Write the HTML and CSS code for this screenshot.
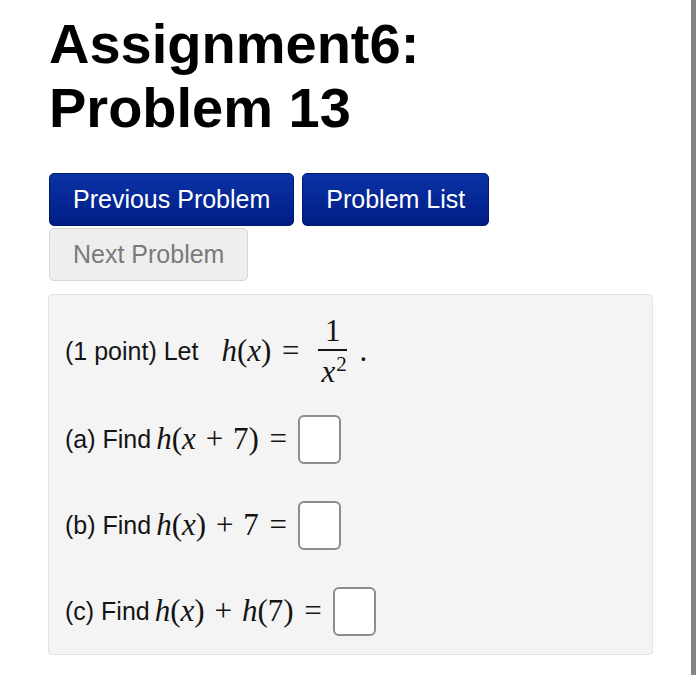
FILE: index.html
```html
<!DOCTYPE html>
<html lang="en">
<head>
<meta charset="utf-8">
<title>Assignment6: Problem 13</title>
<link rel="stylesheet" href="styles.css">
</head>
<body>
<div class="screen">
  <main class="page">
    <h1 class="title">Assignment6:<br>Problem 13</h1>
    <nav class="nav">
      <a class="btn btn-primary" href="#">Previous Problem</a>
      <a class="btn btn-primary" href="#">Problem List</a>
      <span class="btn btn-disabled">Next Problem</span>
    </nav>
    <section class="problem">
      <div class="row row-intro">
        <span class="txt">(1 point) Let</span>
        <span class="math intro-math"><i>h</i>(<i>x</i>)<span class="rel">=</span></span>
        <span class="frac">
          <span class="num">1</span>
          <span class="den"><i>x</i><sup>2</sup></span>
        </span>
        <span class="period">.</span>
      </div>
      <div class="row">
        <span class="txt">(a) Find</span>
        <span class="math"><i>h</i>(<i>x</i><span class="op">+</span>7)<span class="rel">=</span></span>
        <span class="answer"></span>
      </div>
      <div class="row">
        <span class="txt">(b) Find</span>
        <span class="math"><i>h</i>(<i>x</i>)<span class="op">+</span>7<span class="rel">=</span></span>
        <span class="answer"></span>
      </div>
      <div class="row">
        <span class="txt">(c) Find</span>
        <span class="math"><i>h</i>(<i>x</i>)<span class="op">+</span><i>h</i>(7)<span class="rel">=</span></span>
        <span class="answer"></span>
      </div>
    </section>
  </main>
  <div class="scrollbar"></div>
</div>
</body>
</html>
```

FILE: styles.css
```css
* { box-sizing: border-box; }

html, body {
  margin: 0;
  padding: 0;
  background: #ffffff;
}

body {
  font-family: "Liberation Sans", Arial, sans-serif;
  color: #141414;
}

.screen {
  display: flex;
  width: 700px;
  min-height: 675px;
}

.page {
  flex: 0 0 691px;
  padding-left: 48px;
}

.scrollbar {
  flex: 0 0 5px;
  background: #828282;
}

.title {
  margin: 12px 0 33px 1px;
  font-size: 56px;
  line-height: 64px;
  font-weight: bold;
  color: #000000;
}

.nav {
  display: flex;
  flex-wrap: wrap;
  gap: 2px 8px;
  width: 604px;
  margin-left: 1px;
}

.btn {
  display: inline-flex;
  align-items: center;
  justify-content: center;
  height: 53px;
  padding: 0 23px;
  border-radius: 5px;
  font-size: 25px;
  text-decoration: none;
  border: 1px solid transparent;
}

.btn-primary {
  color: #ffffff;
  background: linear-gradient(#0a33a6, #001d85);
  border-color: #00176a;
}

.btn-disabled {
  color: #7a7a7a;
  background: #eeeeee;
  border-color: #d6d6d6;
}

.problem {
  width: 605px;
  margin-top: 13px;
  padding: 20px 16px 18px 16px;
  background: #f4f4f4;
  border: 1px solid #e2e2e2;
  border-radius: 4px;
}

.row {
  display: flex;
  align-items: center;
  height: 50px;
  margin-top: 36px;
  font-size: 25px;
}

.row-intro {
  height: 72px;
  margin-top: 0;
  margin-bottom: -9px;
}

.txt {
  white-space: pre;
}

.math {
  font-family: "Liberation Serif", "Times New Roman", serif;
  font-size: 31px;
  margin-left: 5px;
  white-space: nowrap;
}

.intro-math {
  margin-left: 23px;
}

.math i {
  font-style: italic;
}

.op {
  margin: 0 0.32em;
}

.rel {
  margin: 0 0.34em;
}

.frac {
  display: inline-flex;
  flex-direction: column;
  align-items: center;
  font-family: "Liberation Serif", "Times New Roman", serif;
  font-size: 31px;
  line-height: 32px;
  margin-left: 8px;
}

.num {
  display: block;
  padding: 0 7px 2px;
  border-bottom: 2px solid #141414;
}

.den {
  display: block;
  padding-top: 5px;
  padding-left: 3px;
}

.den i {
  font-style: italic;
}

.den sup {
  font-size: 21px;
  line-height: 0;
  vertical-align: 11px;
  margin-left: 1px;
}

.period {
  font-family: "Liberation Serif", "Times New Roman", serif;
  font-size: 31px;
  margin-left: 12px;
}

.answer {
  display: block;
  width: 43px;
  height: 49px;
  margin-left: 1px;
  background: #ffffff;
  border: 2px solid #8c8c8c;
  border-radius: 6px;
}
```
